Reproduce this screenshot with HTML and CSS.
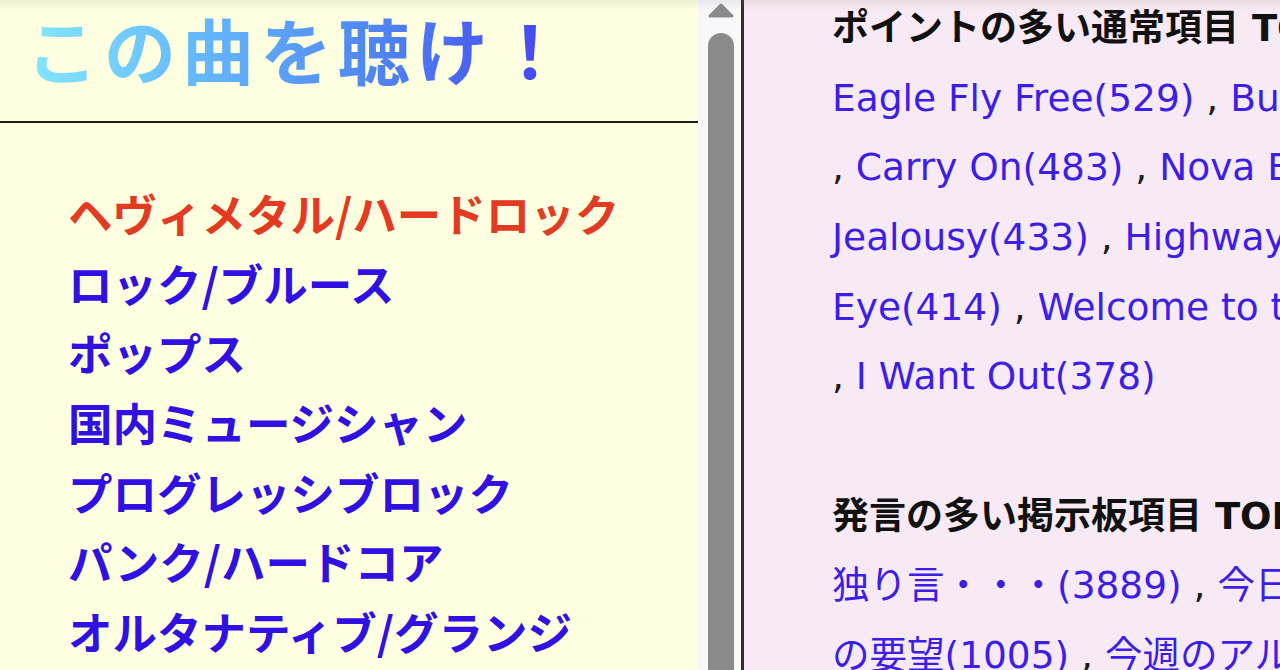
FILE: index.html
```html
<!DOCTYPE html>
<html lang="ja">
<head>
<meta charset="utf-8">
<title>この曲を聴け！</title>
<link rel="stylesheet" href="styles.css">
</head>
<body>
<div class="frames">
  <div class="menu-frame">
    <div class="menu">
      <h1 class="title">この曲を聴け！</h1>
      <hr class="rule">
      <ul class="genres">
        <li><a class="current" href="#">ヘヴィメタル/ハードロック</a></li>
        <li><a href="#">ロック/ブルース</a></li>
        <li><a href="#">ポップス</a></li>
        <li><a href="#">国内ミュージシャン</a></li>
        <li><a href="#">プログレッシブロック</a></li>
        <li><a href="#">パンク/ハードコア</a></li>
        <li><a href="#">オルタナティブ/グランジ</a></li>
      </ul>
    </div>
    <div class="scrollbar">
      <svg class="arrow" width="26" height="15" viewBox="0 0 26 15"><path d="M13 2 L24 13 L2 13 Z" fill="#8a8a8a" stroke="#8a8a8a" stroke-width="3" stroke-linejoin="round"/></svg>
      <div class="thumb"></div>
    </div>
  </div>
  <div class="frame-border"></div>
  <div class="main-frame">
    <div class="content">
      <h2 class="section-title">ポイントの多い通常項目 TOP10</h2>
      <p class="ranking">
        <a href="#">Eagle Fly Free(529)</a> , <a href="#">Burn(512)</a> , <a href="#">Painkiller(498)</a><br>
        , <a href="#">Carry On(483)</a> , <a href="#">Nova Era(471)</a> , <a href="#">Stargazer(452)</a><br>
        <a href="#">Jealousy(433)</a> , <a href="#">Highway Star(428)</a> , <a href="#">Eye of the</a><br>
        <a href="#">Eye(414)</a> , <a href="#">Welcome to the Jungle(396)</a><br>
        , <a href="#">I Want Out(378)</a>
      </p>
      <h2 class="section-title">発言の多い掲示板項目 TOP10</h2>
      <p class="ranking">
        <a href="#">独り言・・・(3889)</a> , <a href="#">今日のBGM(2114)</a> , <a href="#">管理人へ</a><br>
        <a href="#">の要望(1005)</a> , <a href="#">今週のアルバム(987)</a>
      </p>
    </div>
  </div>
</div>
</body>
</html>
```

FILE: styles.css
```css
html, body {
  margin: 0;
  padding: 0;
  height: 100%;
  overflow: hidden;
}

body {
  position: relative;
  background: #fefee0;
}

body::before {
  content: "";
  position: fixed;
  left: 0;
  top: 0;
  right: 0;
  height: 10px;
  background: linear-gradient(rgba(120, 120, 120, 0.12), rgba(120, 120, 120, 0));
  pointer-events: none;
  z-index: 5;
}

.frames {
  display: flex;
  height: 670px;
}

.menu-frame {
  display: flex;
  width: 741px;
  flex: none;
}

.menu {
  width: 698px;
  flex: none;
  background: #fefee0;
  font-family: "Noto Sans CJK JP", sans-serif;
}

.title {
  margin: 0;
  padding-left: 26px;
  font-size: 72px;
  line-height: 96px;
  font-weight: 700;
  letter-spacing: 6px;
  white-space: nowrap;
  background: linear-gradient(90deg, #84e6ff 30px, #64b8fb 200px, #4f84f3 380px, #4646f0 550px);
  -webkit-background-clip: text;
  background-clip: text;
  color: transparent;
}

.rule {
  margin: 25px 0 0;
  height: 0;
  border: 0;
  border-top: 2px solid #1e1e16;
}

.genres {
  list-style: none;
  margin: 0;
  padding: 55px 0 0 68px;
  font-size: 44.5px;
  line-height: 69.67px;
  font-weight: 700;
}

.genres a {
  color: #3010e2;
  text-decoration: none;
}

.genres a.current {
  color: #e23b22;
}

.scrollbar {
  width: 43px;
  flex: none;
  background: #f8f8fa;
  display: flex;
  flex-direction: column;
  align-items: center;
  padding-left: 2px;
  box-sizing: border-box;
}

.arrow {
  display: block;
  margin-top: 3px;
}

.thumb {
  margin-top: 15px;
  width: 26px;
  flex: 1;
  background: #8a8a8a;
  border-radius: 13px 13px 0 0;
}

.frame-border {
  width: 3px;
  flex: none;
  background: #2f2f33;
}

.main-frame {
  flex: 1;
  min-width: 0;
  overflow: hidden;
  background: #f8eaf4;
}

.content {
  margin-top: -6px;
  padding-left: 88px;
  white-space: nowrap;
  font-family: "DejaVu Sans", "Noto Sans CJK JP", sans-serif;
  font-size: 37.5px;
  line-height: 69.67px;
  color: #1c1c1c;
}

.section-title {
  margin: 0;
  font-size: 37px;
  line-height: 69.67px;
  font-weight: 700;
  color: #111;
}

.ranking {
  margin: 0 0 69.67px;
}

.ranking a {
  color: #3c1ee6;
  text-decoration: none;
}
```
